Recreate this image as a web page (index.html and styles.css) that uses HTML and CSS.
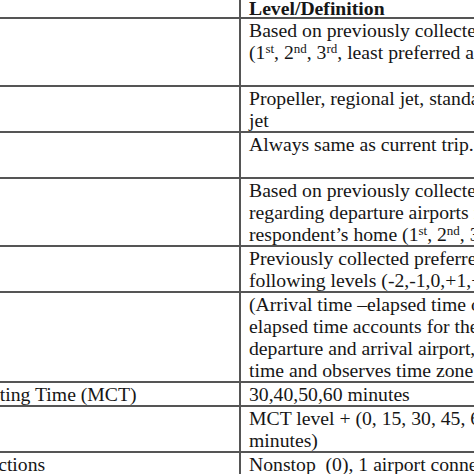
FILE: index.html
```html
<!DOCTYPE html>
<html>
<head>
<meta charset="utf-8">
<link rel="stylesheet" href="styles.css">
</head>
<body>
<div class="table">
  <div class="row head">
    <div class="c1">Attribute</div>
    <div class="c2">Level/Definition</div>
  </div>
  <div class="row">
    <div class="c1">Airline</div>
    <div class="c2">Based on previously collected preferences<br>(1<sup>st</sup>, 2<sup>nd</sup>, 3<sup>rd</sup>, least preferred airline)<br>&nbsp;</div>
  </div>
  <div class="row">
    <div class="c1">Aircraft</div>
    <div class="c2">Propeller, regional jet, standard jet, wide-body<br>jet</div>
  </div>
  <div class="row">
    <div class="c1">Fare</div>
    <div class="c2">Always same as current trip.<br>&nbsp;</div>
  </div>
  <div class="row">
    <div class="c1">Airport</div>
    <div class="c2">Based on previously collected preferences<br>regarding departure airports near<br>respondent’s home (1<sup>st</sup>, 2<sup>nd</sup>, 3<sup>rd</sup>)</div>
  </div>
  <div class="row">
    <div class="c1">Departure</div>
    <div class="c2">Previously collected preferred time with<br>following levels (-2,-1,0,+1,+2 hours)</div>
  </div>
  <div class="row">
    <div class="c1">Arrival</div>
    <div class="c2">(Arrival time –elapsed time of current trip,<br>elapsed time accounts for the distance between<br>departure and arrival airport, connection<br>time and observes time zone changes)</div>
  </div>
  <div class="row">
    <div class="c1">Minimum Connecting Time (MCT)</div>
    <div class="c2">30,40,50,60 minutes</div>
  </div>
  <div class="row">
    <div class="c1">Connection</div>
    <div class="c2">MCT level + (0, 15, 30, 45, 60, 90<br>minutes)</div>
  </div>
  <div class="row">
    <div class="c1">Number of Connections</div>
    <div class="c2">Nonstop &nbsp;(0), 1 airport connection</div>
  </div>
</div>
</body>
</html>
```
FILE: styles.css
```css
html, body {
  margin: 0;
  padding: 0;
  background: #ffffff;
  overflow: hidden;
  width: 474px;
  height: 474px;
}
.table {
  margin-top: -1px;
  margin-left: -152px;
  width: 1100px;
  font-family: "Liberation Serif", "Times New Roman", serif;
  font-size: 19.7px;
  line-height: 22px;
  color: #161616;
}
.row {
  display: grid;
  grid-template-columns: 391px 1fr;
  border-bottom: 2px solid #555555;
}
.c1 {
  padding-left: 8px;
  white-space: nowrap;
}
.c2 {
  border-left: 2px solid #555555;
  padding-left: 8px;
  white-space: nowrap;
}
.head {
  line-height: 18px;
  font-weight: bold;
}
.head .c1 {
  visibility: hidden;
}
sup {
  font-size: 0.66em;
  line-height: 0;
  vertical-align: 0.45em;
}
```
